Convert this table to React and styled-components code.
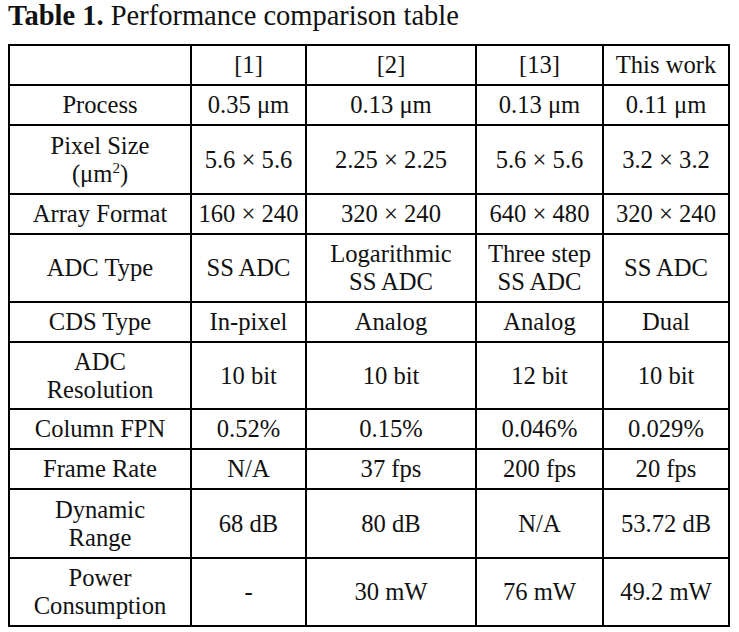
import React from 'react'
import styled, { createGlobalStyle } from 'styled-components'

const GlobalStyle = createGlobalStyle`
  html, body {
    margin: 0;
    padding: 0;
    background: #ffffff;
  }
  body {
    font-family: 'Liberation Serif', 'Times New Roman', serif;
    color: #111;
  }
`

const Page = styled.div`
  width: 739px;
  height: 632px;
  overflow: hidden;
  padding-left: 8px;
  box-sizing: border-box;
`

const Caption = styled.div`
  font-size: 28.5px;
  line-height: 32px;
  height: 32px;
  white-space: nowrap;
  b {
    font-weight: 700;
  }
`

const Table = styled.table`
  border-collapse: collapse;
  table-layout: fixed;
  width: 720px;
  margin-top: 12px;
  border: 2px solid #000;
`

const Row = styled.tr`
  height: ${(p) => p.$h}px;
`

const Cell = styled.td`
  border: 2px solid #000;
  padding: 0 1px;
  text-align: center;
  vertical-align: middle;
  font-size: 24.6px;
  line-height: 28px;
  white-space: nowrap;
`

const Sup = styled.sup`
  font-size: 15px;
  line-height: 0;
  vertical-align: 9px;
`

const cols = [182, 115, 170, 127, 126]

const rows = [
  { h: 40, cells: ['', '[1]', '[2]', '[13]', 'This work'] },
  { h: 40, cells: ['Process', '0.35 μm', '0.13 μm', '0.13 μm', '0.11 μm'] },
  {
    h: 69,
    cells: [
      <>
        Pixel Size
        <br />
        (μm<Sup>2</Sup>)
      </>,
      '5.6 × 5.6',
      '2.25 × 2.25',
      '5.6 × 5.6',
      '3.2 × 3.2',
    ],
  },
  { h: 40, cells: ['Array Format', '160 × 240', '320 × 240', '640 × 480', '320 × 240'] },
  {
    h: 68,
    cells: [
      'ADC Type',
      'SS ADC',
      <>
        Logarithmic
        <br />
        SS ADC
      </>,
      <>
        Three step
        <br />
        SS ADC
      </>,
      'SS ADC',
    ],
  },
  { h: 40, cells: ['CDS Type', 'In-pixel', 'Analog', 'Analog', 'Dual'] },
  {
    h: 67,
    cells: [
      <>
        ADC
        <br />
        Resolution
      </>,
      '10 bit',
      '10 bit',
      '12 bit',
      '10 bit',
    ],
  },
  { h: 40, cells: ['Column FPN', '0.52%', '0.15%', '0.046%', '0.029%'] },
  { h: 40, cells: ['Frame Rate', 'N/A', '37 fps', '200 fps', '20 fps'] },
  {
    h: 69,
    cells: [
      <>
        Dynamic
        <br />
        Range
      </>,
      '68 dB',
      '80 dB',
      'N/A',
      '53.72 dB',
    ],
  },
  {
    h: 68,
    cells: [
      <>
        Power
        <br />
        Consumption
      </>,
      '-',
      '30 mW',
      '76 mW',
      '49.2 mW',
    ],
  },
]

const App = () => {
  return (
    <Page>
      <GlobalStyle />
      <Caption>
        <b>Table 1.</b> Performance comparison table
      </Caption>
      <Table>
        <colgroup>
          {cols.map((w, i) => (
            <col key={i} style={{ width: w }} />
          ))}
        </colgroup>
        <tbody>
          {rows.map((r, i) => (
            <Row key={i} $h={r.h}>
              {r.cells.map((c, j) => (
                <Cell key={j}>{c}</Cell>
              ))}
            </Row>
          ))}
        </tbody>
      </Table>
    </Page>
  )
}

export default App
